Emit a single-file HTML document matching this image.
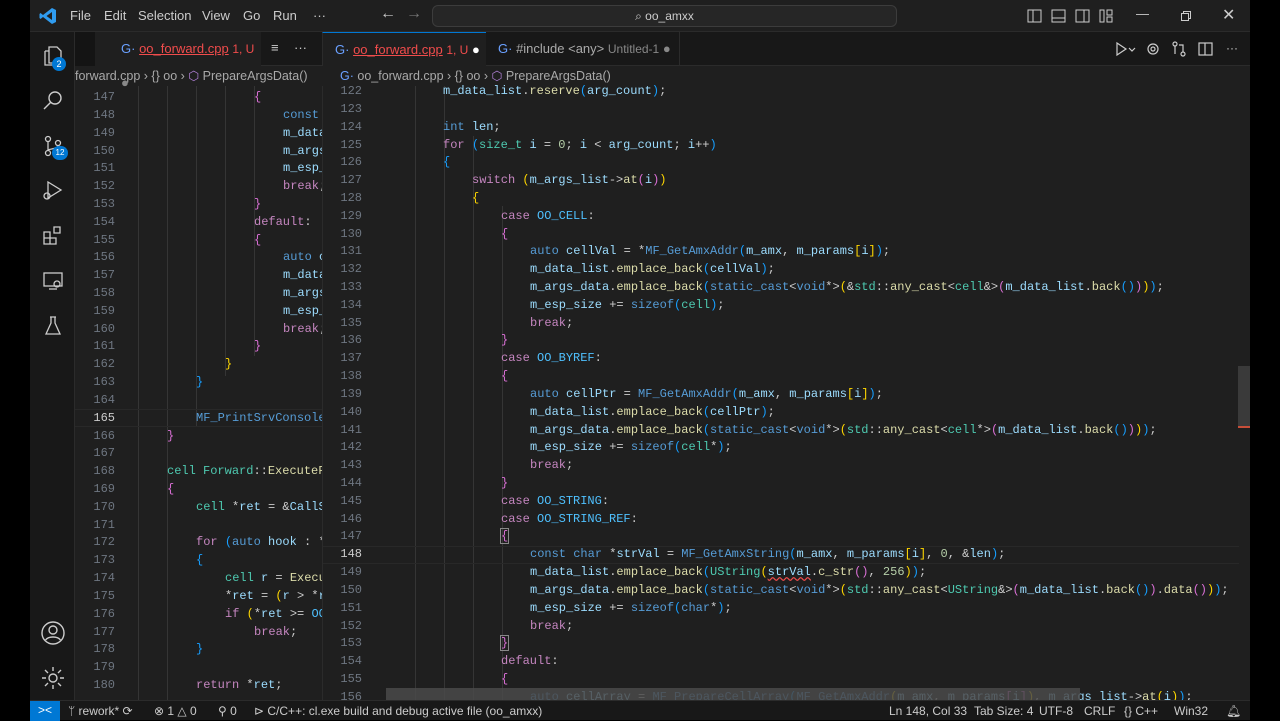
<!DOCTYPE html>
<html><head><meta charset="utf-8">
<style>
*{margin:0;padding:0;box-sizing:border-box}
body{width:1280px;height:720px;background:#000;position:relative;overflow:hidden;font-family:"Liberation Sans",sans-serif;color:#ccc}
.abs{position:absolute}
#win{position:absolute;left:30px;top:0;width:1220px;height:720px;background:#1f1f1f;overflow:hidden}
#title{position:absolute;left:0;top:0;width:1220px;height:32px;background:#1f1f1f;border-bottom:1px solid #2b2b2b;font-size:13px}
#title span.m{position:absolute;top:8px;color:#ccc}
#act{position:absolute;left:0;top:32px;width:45px;height:668px;background:#181818;border-right:1px solid #2b2b2b}
#tabs{position:absolute;left:45px;top:32px;width:1175px;height:34px;background:#181818;border-bottom:1px solid #2b2b2b}
.code{font-family:"Liberation Mono",monospace;font-size:12px;white-space:pre;position:absolute;height:17.82px;line-height:17.82px;color:#ccc}
.ln{font-family:"Liberation Mono",monospace;font-size:12px;position:absolute;text-align:right;color:#6e7681;height:17.82px;line-height:17.82px}
.k{color:#c586c0}.t{color:#569cd6}.v{color:#9cdcfe}.f{color:#dcdcaa}.g{color:#4ec9b0}.c{color:#4fc1ff}.n{color:#b5cea8}.a{color:#ffd700}.b{color:#da70d6}.e{color:#179fff}
.guide{position:absolute;width:1px;background:#353535}
#status{position:absolute;left:0;top:700px;width:1220px;height:20px;background:#181818;border-top:1px solid #2b2b2b;font-size:12px;color:#ccc}
#status span{position:absolute;top:3px}
.tab{position:absolute;top:0;height:34px;font-size:13px;line-height:34px}
.bc{position:absolute;top:66px;height:20px;font-size:12.5px;line-height:20px;color:#a9a9a9}
</style></head><body>
<div id="win">
<div id="title">
 <svg class="abs" style="left:9px;top:7px" width="18" height="18" viewBox="0 0 18 18"><path d="M13 1 L17 3 V15 L13 17 L4 10 L1.5 12 L0.5 11 V7 L1.5 6 L4 8 L13 1 Z M13 5 L7.5 9 L13 13 Z" fill="#2f9cf0"/></svg>
 <span class="m" style="left:40px">File</span><span class="m" style="left:74px">Edit</span><span class="m" style="left:108px">Selection</span><span class="m" style="left:172px">View</span><span class="m" style="left:213px">Go</span><span class="m" style="left:243px">Run</span><span class="m" style="left:283px">···</span>
 <span class="m" style="left:350px;font-size:16px;top:5px">←</span><span class="m" style="left:376px;font-size:16px;top:5px;color:#777">→</span>
 <div class="abs" style="left:402px;top:5px;width:465px;height:22px;background:#262626;border:1px solid #3c3c3c;border-radius:6px;font-size:12px;line-height:20px;text-align:center;color:#ccc">⌕ oo_amxx</div>
 <svg class="abs" style="left:997px;top:9px" width="100" height="14"><g fill="none" stroke="#ccc" stroke-width="1"><rect x="1" y="1" width="13" height="12"/><line x1="6" y1="1" x2="6" y2="13"/><rect x="25" y="1" width="13" height="12"/><line x1="25" y1="9" x2="38" y2="9"/><rect x="49" y="1" width="13" height="12"/><line x1="57" y1="1" x2="57" y2="13"/><rect x="73" y="1" width="4" height="12"/><rect x="80" y="1" width="5" height="5"/><rect x="80" y="8" width="5" height="5"/></g></svg>
 <span class="m" style="left:1106px;top:6px">—</span>
 <svg class="abs" style="left:1150px;top:10px" width="12" height="12"><g fill="none" stroke="#ccc"><rect x="1.5" y="3.5" width="7" height="7"/><path d="M3.5 3.5V1.5H10.5V8.5H8.5"/></g></svg>
 <span class="m" style="left:1192px;top:5px;font-size:16px">✕</span>
</div>
<div id="act">
 <svg class="abs" style="left:11px;top:12px" width="24" height="24" fill="none" stroke="#ccc" stroke-width="1.3"><path d="M8 3h8l4 4v12H8z M4 7h4 M4 7v14h10v-2"/></svg>
 <div class="abs" style="left:22px;top:25px;width:14px;height:14px;border-radius:7px;background:#0078d4;font-size:9px;color:#fff;text-align:center;line-height:14px">2</div>
 <svg class="abs" style="left:11px;top:56px" width="24" height="24" fill="none" stroke="#ccc" stroke-width="1.4"><circle cx="14" cy="10" r="6"/><path d="M10 14L3 21"/></svg>
 <svg class="abs" style="left:11px;top:102px" width="24" height="24" fill="none" stroke="#ccc" stroke-width="1.3"><circle cx="7" cy="5" r="2.5"/><circle cx="7" cy="19" r="2.5"/><circle cx="17" cy="9" r="2.5"/><path d="M7 7.5v9 M17 11.5c0 4-10 3-10 5"/></svg>
 <div class="abs" style="left:22px;top:114px;width:16px;height:14px;border-radius:7px;background:#0078d4;font-size:8px;color:#fff;text-align:center;line-height:14px">12</div>
 <svg class="abs" style="left:11px;top:146px" width="24" height="24" fill="none" stroke="#ccc" stroke-width="1.3"><path d="M7 4l13 8-13 8z"/><circle cx="6" cy="18" r="3"/></svg>
 <svg class="abs" style="left:11px;top:192px" width="24" height="24" fill="none" stroke="#ccc" stroke-width="1.3"><path d="M3 8h6v6H3z M3 14h6v6H3z M9 14h6v6H9z M13 3h6v6h-6z"/></svg>
 <svg class="abs" style="left:11px;top:237px" width="24" height="24" fill="none" stroke="#ccc" stroke-width="1.3"><rect x="3" y="4" width="18" height="13"/><path d="M8 20h8"/><circle cx="16" cy="15" r="3"/></svg>
 <svg class="abs" style="left:11px;top:282px" width="24" height="24" fill="none" stroke="#ccc" stroke-width="1.3"><path d="M9 3h6 M10 3v6l-5 11h14l-5-11V3"/></svg>
 <svg class="abs" style="left:10px;top:588px" width="26" height="26" fill="none" stroke="#ccc" stroke-width="1.4"><circle cx="13" cy="13" r="11"/><circle cx="13" cy="10" r="4"/><path d="M5.5 20c3-4 12-4 15 0"/></svg>
 <svg class="abs" style="left:10px;top:633px" width="26" height="26" fill="none" stroke="#ccc" stroke-width="1.4"><circle cx="13" cy="13" r="4"/><path d="M13 2v4M13 20v4M2 13h4M20 13h4M5 5l3 3M18 18l3 3M5 21l3-3M18 8l3-3"/></svg>
</div>
<div id="tabs">
 <div class="tab" style="left:0;width:20px;background:#141414"></div>
 <div class="tab" style="left:20px;width:166px;background:#1f1f1f;padding-left:26px;color:#f14c4c"><span style="color:#6aa0ff">G·</span> <span style="text-decoration:underline">oo_forward.cpp</span> <span style="font-size:12px">1, U</span> <span style="color:#888">●</span></div>
 <span class="abs" style="left:196px;top:8px;font-size:13px">≡</span><span class="abs" style="left:219px;top:8px;font-size:13px">···</span>
 <div class="tab" style="left:247px;width:164px;background:#1f1f1f;border-top:1px solid #0078d4;border-left:1px solid #2b2b2b;padding-left:12px;color:#f14c4c"><span style="color:#6aa0ff">G·</span> <span style="text-decoration:underline">oo_forward.cpp</span> <span style="font-size:12px">1, U</span> <span style="color:#fff">●</span></div>
 <div class="tab" style="left:411px;width:194px;border-right:1px solid #2b2b2b;padding-left:12px;color:#aaa"><span style="color:#6aa0ff">G·</span> #include &lt;any&gt; <span style="font-size:12px;color:#888">Untitled-1</span> <span style="color:#888">●</span></div>
 <svg class="abs" style="left:1035px;top:9px" width="140" height="16" fill="none" stroke="#ccc" stroke-width="1.2"><path d="M7 2l9 6-9 6z"/><path d="M19 7l3 3 3-3"/><circle cx="43" cy="8" r="5"/><circle cx="43" cy="8" r="2"/><circle cx="65" cy="3" r="2"/><circle cx="73" cy="13" r="2"/><path d="M65 5v8 M73 11V4h-4"/><rect x="89" y="2" width="13" height="12"/><line x1="95" y1="2" x2="95" y2="14"/><text x="116" y="11" fill="#ccc" stroke="none" font-size="12">···</text></svg>
</div>
<div class="bc" style="left:45px;width:260px;overflow:hidden">forward.cpp › {} oo › <span style="color:#b180d7">⬡</span> PrepareArgsData()</div>
<div class="bc" style="left:310px"><span style="color:#6aa0ff">G·</span> oo_forward.cpp › {} oo › <span style="color:#b180d7">⬡</span> PrepareArgsData()</div>

<div class="abs" style="left:45px;top:86px;width:247px;height:614px;overflow:hidden">
 <div class="guide" style="left:63px;top:0;height:614px"></div>
 <div class="guide" style="left:92px;top:0;height:614px"></div>
 <div class="guide" style="left:121px;top:0;height:340px"></div>
 <div class="guide" style="left:150px;top:0;height:290px"></div>
 <div class="guide" style="left:179px;top:0;height:270px"></div>
 <div class="abs" style="left:0;top:323px;width:247px;height:18px;border-top:1px solid #282828;border-bottom:1px solid #282828"></div>
</div>
<div class="abs" style="left:292px;top:86px;width:928px;height:614px;overflow:hidden;border-left:1px solid #2b2b2b">
 <div class="guide" style="left:92px;top:0;height:614px"></div>
 <div class="guide" style="left:121px;top:0;height:614px"></div>
 <div class="guide" style="left:150px;top:50px;height:564px"></div>
 <div class="guide" style="left:179px;top:120px;height:494px"></div>
 <div class="abs" style="left:0;top:460px;width:916px;height:18px;border-top:1px solid #282828;border-bottom:1px solid #282828"></div>
 <div class="abs" style="left:915px;top:280px;width:13px;height:60px;background:#3a3a3a"></div>
 <div class="abs" style="left:915px;top:340px;width:13px;height:2px;background:#c74e39"></div>
</div>
</div>

<div style="position:absolute;left:0;top:0">
<div class="ln" style="left:320px;width:42px;top:83px">122</div><div class="code" style="left:443px;top:83px"><span class="v">m_data_list</span>.<span class="f">reserve</span><span class="e">(</span><span class="v">arg_count</span><span class="e">)</span>;</div>
<div class="ln" style="left:320px;width:42px;top:100.8px">123</div>
<div class="ln" style="left:320px;width:42px;top:118.6px">124</div><div class="code" style="left:443px;top:118.6px"><span class="t">int</span> <span class="v">len</span>;</div>
<div class="ln" style="left:320px;width:42px;top:136.5px">125</div><div class="code" style="left:443px;top:136.5px"><span class="k">for</span> <span class="e">(</span><span class="g">size_t</span> <span class="v">i</span> = <span class="n">0</span>; <span class="v">i</span> &lt; <span class="v">arg_count</span>; <span class="v">i</span>++<span class="e">)</span></div>
<div class="ln" style="left:320px;width:42px;top:154.3px">126</div><div class="code" style="left:443px;top:154.3px"><span class="e">{</span></div>
<div class="ln" style="left:320px;width:42px;top:172.1px">127</div><div class="code" style="left:472px;top:172.1px"><span class="k">switch</span> <span class="a">(</span><span class="v">m_args_list</span>-&gt;<span class="f">at</span><span class="b">(</span><span class="v">i</span><span class="b">)</span><span class="a">)</span></div>
<div class="ln" style="left:320px;width:42px;top:189.9px">128</div><div class="code" style="left:472px;top:189.9px"><span class="a">{</span></div>
<div class="ln" style="left:320px;width:42px;top:207.7px">129</div><div class="code" style="left:501px;top:207.7px"><span class="k">case</span> <span class="c">OO_CELL</span>:</div>
<div class="ln" style="left:320px;width:42px;top:225.5px">130</div><div class="code" style="left:501px;top:225.5px"><span class="b">{</span></div>
<div class="ln" style="left:320px;width:42px;top:243.4px">131</div><div class="code" style="left:530px;top:243.4px"><span class="t">auto</span> <span class="v">cellVal</span> = *<span class="t">MF_GetAmxAddr</span><span class="e">(</span><span class="v">m_amx</span>, <span class="v">m_params</span><span class="a">[</span><span class="v">i</span><span class="a">]</span><span class="e">)</span>;</div>
<div class="ln" style="left:320px;width:42px;top:261.2px">132</div><div class="code" style="left:530px;top:261.2px"><span class="v">m_data_list</span>.<span class="f">emplace_back</span><span class="e">(</span><span class="v">cellVal</span><span class="e">)</span>;</div>
<div class="ln" style="left:320px;width:42px;top:279px">133</div><div class="code" style="left:530px;top:279px"><span class="v">m_args_data</span>.<span class="f">emplace_back</span><span class="e">(</span><span class="t">static_cast</span>&lt;<span class="t">void</span>*&gt;<span class="a">(</span>&amp;<span class="g">std</span>::<span class="f">any_cast</span>&lt;<span class="g">cell</span>&amp;&gt;<span class="b">(</span><span class="v">m_data_list</span>.<span class="f">back</span><span class="e">()</span><span class="b">)</span><span class="a">)</span><span class="e">)</span>;</div>
<div class="ln" style="left:320px;width:42px;top:296.8px">134</div><div class="code" style="left:530px;top:296.8px"><span class="v">m_esp_size</span> += <span class="t">sizeof</span><span class="e">(</span><span class="g">cell</span><span class="e">)</span>;</div>
<div class="ln" style="left:320px;width:42px;top:314.6px">135</div><div class="code" style="left:530px;top:314.6px"><span class="k">break</span>;</div>
<div class="ln" style="left:320px;width:42px;top:332.4px">136</div><div class="code" style="left:501px;top:332.4px"><span class="b">}</span></div>
<div class="ln" style="left:320px;width:42px;top:350.3px">137</div><div class="code" style="left:501px;top:350.3px"><span class="k">case</span> <span class="c">OO_BYREF</span>:</div>
<div class="ln" style="left:320px;width:42px;top:368.1px">138</div><div class="code" style="left:501px;top:368.1px"><span class="b">{</span></div>
<div class="ln" style="left:320px;width:42px;top:385.9px">139</div><div class="code" style="left:530px;top:385.9px"><span class="t">auto</span> <span class="v">cellPtr</span> = <span class="t">MF_GetAmxAddr</span><span class="e">(</span><span class="v">m_amx</span>, <span class="v">m_params</span><span class="a">[</span><span class="v">i</span><span class="a">]</span><span class="e">)</span>;</div>
<div class="ln" style="left:320px;width:42px;top:403.7px">140</div><div class="code" style="left:530px;top:403.7px"><span class="v">m_data_list</span>.<span class="f">emplace_back</span><span class="e">(</span><span class="v">cellPtr</span><span class="e">)</span>;</div>
<div class="ln" style="left:320px;width:42px;top:421.5px">141</div><div class="code" style="left:530px;top:421.5px"><span class="v">m_args_data</span>.<span class="f">emplace_back</span><span class="e">(</span><span class="t">static_cast</span>&lt;<span class="t">void</span>*&gt;<span class="a">(</span><span class="g">std</span>::<span class="f">any_cast</span>&lt;<span class="g">cell</span>*&gt;<span class="b">(</span><span class="v">m_data_list</span>.<span class="f">back</span><span class="e">()</span><span class="b">)</span><span class="a">)</span><span class="e">)</span>;</div>
<div class="ln" style="left:320px;width:42px;top:439.3px">142</div><div class="code" style="left:530px;top:439.3px"><span class="v">m_esp_size</span> += <span class="t">sizeof</span><span class="e">(</span><span class="g">cell</span>*<span class="e">)</span>;</div>
<div class="ln" style="left:320px;width:42px;top:457.2px">143</div><div class="code" style="left:530px;top:457.2px"><span class="k">break</span>;</div>
<div class="ln" style="left:320px;width:42px;top:475px">144</div><div class="code" style="left:501px;top:475px"><span class="b">}</span></div>
<div class="ln" style="left:320px;width:42px;top:492.8px">145</div><div class="code" style="left:501px;top:492.8px"><span class="k">case</span> <span class="c">OO_STRING</span>:</div>
<div class="ln" style="left:320px;width:42px;top:510.6px">146</div><div class="code" style="left:501px;top:510.6px"><span class="k">case</span> <span class="c">OO_STRING_REF</span>:</div>
<div class="ln" style="left:320px;width:42px;top:528.4px">147</div><div class="code" style="left:501px;top:528.4px"><span class="b" style="outline:1px solid #888">{</span></div>
<div class="ln" style="left:320px;width:42px;top:546.3px;color:#ccc">148</div><div class="code" style="left:530px;top:546.3px"><span class="t">const</span> <span class="t">char</span> *<span class="v">strVal</span> = <span class="t">MF_GetAmxString</span><span class="e">(</span><span class="v">m_amx</span>, <span class="v">m_params</span><span class="a">[</span><span class="v">i</span><span class="a">]</span>, <span class="n">0</span>, &amp;<span class="v">len</span><span class="e">)</span>;</div>
<div class="ln" style="left:320px;width:42px;top:564.1px">149</div><div class="code" style="left:530px;top:564.1px"><span class="v">m_data_list</span>.<span class="f">emplace_back</span><span class="e">(</span><span class="g">UString</span><span class="a">(</span><span class="v" style="text-decoration:underline wavy #f14c4c">strVal</span>.<span class="f">c_str</span><span class="b">()</span>, <span class="n">256</span><span class="a">)</span><span class="e">)</span>;</div>
<div class="ln" style="left:320px;width:42px;top:581.9px">150</div><div class="code" style="left:530px;top:581.9px"><span class="v">m_args_data</span>.<span class="f">emplace_back</span><span class="e">(</span><span class="t">static_cast</span>&lt;<span class="t">void</span>*&gt;<span class="a">(</span><span class="g">std</span>::<span class="f">any_cast</span>&lt;<span class="g">UString</span>&amp;&gt;<span class="b">(</span><span class="v">m_data_list</span>.<span class="f">back</span><span class="e">()</span><span class="b">)</span>.<span class="f">data</span><span class="b">()</span><span class="a">)</span><span class="e">)</span>;</div>
<div class="ln" style="left:320px;width:42px;top:599.7px">151</div><div class="code" style="left:530px;top:599.7px"><span class="v">m_esp_size</span> += <span class="t">sizeof</span><span class="e">(</span><span class="t">char</span>*<span class="e">)</span>;</div>
<div class="ln" style="left:320px;width:42px;top:617.5px">152</div><div class="code" style="left:530px;top:617.5px"><span class="k">break</span>;</div>
<div class="ln" style="left:320px;width:42px;top:635.3px">153</div><div class="code" style="left:501px;top:635.3px"><span class="b" style="outline:1px solid #888">}</span></div>
<div class="ln" style="left:320px;width:42px;top:653.2px">154</div><div class="code" style="left:501px;top:653.2px"><span class="k">default</span>:</div>
<div class="ln" style="left:320px;width:42px;top:671px">155</div><div class="code" style="left:501px;top:671px"><span class="b">{</span></div>
<div class="ln" style="left:320px;width:42px;top:688.8px;height:11px;overflow:hidden">156</div>
<div class="code" style="left:530px;top:688.8px;height:11px;overflow:hidden"><span class="t">auto</span> <span class="v">cellArray</span> = <span class="t">MF_PrepareCellArray</span><span class="e">(</span><span class="t">MF_GetAmxAddr</span><span class="a">(</span><span class="v">m_amx</span>, <span class="v">m_params</span><span class="b">[</span><span class="v">i</span><span class="b">]</span><span class="a">)</span>, <span class="v">m_args_list</span>-&gt;<span class="f">at</span><span class="a">(</span><span class="v">i</span><span class="a">)</span><span class="e">)</span>;</div>
<div class="abs" style="left:386px;top:688px;width:694px;height:12px;background:#4a4a4a;opacity:.85"></div>
</div>

<div style="position:absolute;left:75px;top:86px;width:247px;height:614px;overflow:hidden">
<div style="position:absolute;left:-75px;top:-86px">
<div class="ln" style="left:75px;width:40px;top:89px">147</div><div class="code" style="left:254px;top:89px"><span class="b">{</span></div>
<div class="ln" style="left:75px;width:40px;top:106.8px">148</div><div class="code" style="left:283px;top:106.8px"><span class="t">const</span> <span class="t">char</span></div>
<div class="ln" style="left:75px;width:40px;top:124.6px">149</div><div class="code" style="left:283px;top:124.6px"><span class="v">m_data_list</span></div>
<div class="ln" style="left:75px;width:40px;top:142.5px">150</div><div class="code" style="left:283px;top:142.5px"><span class="v">m_args_data</span></div>
<div class="ln" style="left:75px;width:40px;top:160.3px">151</div><div class="code" style="left:283px;top:160.3px"><span class="v">m_esp_size</span></div>
<div class="ln" style="left:75px;width:40px;top:178.1px">152</div><div class="code" style="left:283px;top:178.1px"><span class="k">break</span>;</div>
<div class="ln" style="left:75px;width:40px;top:195.9px">153</div><div class="code" style="left:254px;top:195.9px"><span class="b">}</span></div>
<div class="ln" style="left:75px;width:40px;top:213.7px">154</div><div class="code" style="left:254px;top:213.7px"><span class="k">default</span>:</div>
<div class="ln" style="left:75px;width:40px;top:231.5px">155</div><div class="code" style="left:254px;top:231.5px"><span class="b">{</span></div>
<div class="ln" style="left:75px;width:40px;top:249.4px">156</div><div class="code" style="left:283px;top:249.4px"><span class="t">auto</span> <span class="v">cellArray</span></div>
<div class="ln" style="left:75px;width:40px;top:267.2px">157</div><div class="code" style="left:283px;top:267.2px"><span class="v">m_data_list</span></div>
<div class="ln" style="left:75px;width:40px;top:285px">158</div><div class="code" style="left:283px;top:285px"><span class="v">m_args_data</span></div>
<div class="ln" style="left:75px;width:40px;top:302.8px">159</div><div class="code" style="left:283px;top:302.8px"><span class="v">m_esp_size</span></div>
<div class="ln" style="left:75px;width:40px;top:320.6px">160</div><div class="code" style="left:283px;top:320.6px"><span class="k">break</span>;</div>
<div class="ln" style="left:75px;width:40px;top:338.4px">161</div><div class="code" style="left:254px;top:338.4px"><span class="b">}</span></div>
<div class="ln" style="left:75px;width:40px;top:356.3px">162</div><div class="code" style="left:225px;top:356.3px"><span class="a">}</span></div>
<div class="ln" style="left:75px;width:40px;top:374.1px">163</div><div class="code" style="left:196px;top:374.1px"><span class="e">}</span></div>
<div class="ln" style="left:75px;width:40px;top:391.9px">164</div>
<div class="ln" style="left:75px;width:40px;top:409.7px;color:#ccc">165</div><div class="code" style="left:196px;top:409.7px"><span class="t">MF_PrintSrvConsole</span></div>
<div class="ln" style="left:75px;width:40px;top:427.5px">166</div><div class="code" style="left:167px;top:427.5px"><span class="b">}</span></div>
<div class="ln" style="left:75px;width:40px;top:445.3px">167</div>
<div class="ln" style="left:75px;width:40px;top:463.2px">168</div><div class="code" style="left:167px;top:463.2px"><span class="g">cell</span> <span class="g">Forward</span>::<span class="f">ExecuteForward</span></div>
<div class="ln" style="left:75px;width:40px;top:481px">169</div><div class="code" style="left:167px;top:481px"><span class="b">{</span></div>
<div class="ln" style="left:75px;width:40px;top:498.8px">170</div><div class="code" style="left:196px;top:498.8px"><span class="g">cell</span> *<span class="v">ret</span> = &amp;<span class="v">CallState</span></div>
<div class="ln" style="left:75px;width:40px;top:516.6px">171</div>
<div class="ln" style="left:75px;width:40px;top:534.4px">172</div><div class="code" style="left:196px;top:534.4px"><span class="k">for</span> <span class="e">(</span><span class="t">auto</span> <span class="v">hook</span> : *</div>
<div class="ln" style="left:75px;width:40px;top:552.3px">173</div><div class="code" style="left:196px;top:552.3px"><span class="e">{</span></div>
<div class="ln" style="left:75px;width:40px;top:570.1px">174</div><div class="code" style="left:225px;top:570.1px"><span class="g">cell</span> <span class="v">r</span> = <span class="f">Execute</span></div>
<div class="ln" style="left:75px;width:40px;top:587.9px">175</div><div class="code" style="left:225px;top:587.9px">*<span class="v">ret</span> = <span class="a">(</span><span class="v">r</span> &gt; *<span class="v">ret</span></div>
<div class="ln" style="left:75px;width:40px;top:605.7px">176</div><div class="code" style="left:225px;top:605.7px"><span class="k">if</span> <span class="a">(</span>*<span class="v">ret</span> &gt;= <span class="c">OO_</span></div>
<div class="ln" style="left:75px;width:40px;top:623.5px">177</div><div class="code" style="left:254px;top:623.5px"><span class="k">break</span>;</div>
<div class="ln" style="left:75px;width:40px;top:641.3px">178</div><div class="code" style="left:196px;top:641.3px"><span class="e">}</span></div>
<div class="ln" style="left:75px;width:40px;top:659.2px">179</div>
<div class="ln" style="left:75px;width:40px;top:677px">180</div><div class="code" style="left:196px;top:677px"><span class="k">return</span> *<span class="v">ret</span>;</div>
</div></div>

<div id="status" style="left:30px">
 <div class="abs" style="left:0;top:0;width:30px;height:20px;background:#0078d4;color:#fff;font-size:12px;text-align:center;line-height:19px">&gt;&lt;</div>
 <span style="left:38px">ᛘ rework* ⟳</span>
 <span style="left:124px">⊗ 1 △ 0</span>
 <span style="left:188px">⚲ 0</span>
 <span style="left:224px">⊳ C/C++: cl.exe build and debug active file (oo_amxx)</span>
 <span style="left:859px">Ln 148, Col 33</span>
 <span style="left:944px">Tab Size: 4</span>
 <span style="left:1009px">UTF-8</span>
 <span style="left:1054px">CRLF</span>
 <span style="left:1094px">{} C++</span>
 <span style="left:1144px">Win32</span>
 <span style="left:1196px">🔔︎</span>
</div>
</body></html>
